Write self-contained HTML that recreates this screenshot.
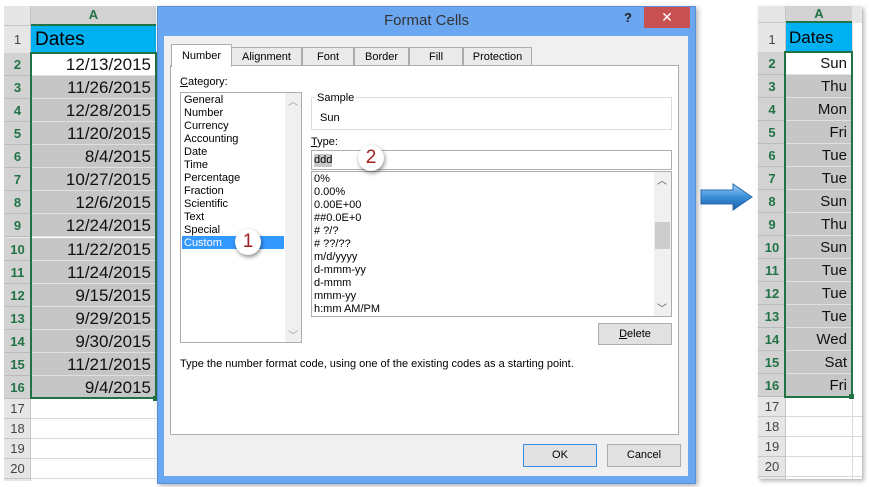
<!DOCTYPE html>
<html><head><style>
*{margin:0;padding:0;box-sizing:border-box}
body{width:869px;height:487px;background:#fff;position:relative;overflow:hidden;font-family:"Liberation Sans",sans-serif}
.a{position:absolute}
.t{font-size:11px;color:#000;white-space:nowrap;line-height:13px}
.hdr{background:#e6e6e6;border-right:1px solid #c6c6c6;border-bottom:1px solid #c6c6c6}
.rn{position:absolute;text-align:center;font-size:13px;color:#217346;font-weight:bold}
.rn2{position:absolute;text-align:center;font-size:13px;color:#444}
.cell{position:absolute;background:#c6c6c6;border-bottom:1px solid #e0e0e0;text-align:right;font-size:17px;color:#111;padding-right:4px}
.btn{position:absolute;background:#e1e1e1;border:1px solid #adadad;font-size:11px;text-align:center;line-height:20px}
.circ{position:absolute;width:26px;height:26px;border-radius:50%;background:#fff;box-shadow:1px 2px 4px rgba(0,0,0,.45);color:#a32020;font-size:19px;text-align:center;line-height:26px}
</style></head><body>

<!-- LEFT SHEET -->
<div class="a" style="left:4px;top:6px;width:152px;height:475px;background:#fff"></div>
<div class="a hdr" style="left:4px;top:6px;width:27px;height:20px"></div>
<div class="a" style="left:31px;top:6px;width:125px;height:20px;background:#d2d2d2;border-bottom:2px solid #217346;text-align:center;font-size:13px;font-weight:bold;color:#217346;line-height:18px">A</div>
<div class="a" style="left:4px;top:26px;width:27px;height:455px;background:#e6e6e6;border-right:1px solid #c6c6c6"></div>
<div class="a" style="left:31px;top:26px;width:125px;height:27px;background:#00b0f0;font-size:19px;padding-left:4px;line-height:28px">Dates</div>
<div class="rn2" style="left:4px;top:32px;width:27px">1</div>
<div id="L"></div>
<div class="a" style="left:30px;top:52px;width:127px;height:347px;border:2px solid #217346"></div>
<div class="a" style="left:153px;top:396px;width:5px;height:5px;background:#217346"></div>

<!-- RIGHT SHEET -->
<div class="a" style="left:758px;top:6px;width:104px;height:473px;background:#fff;box-shadow:2px 2px 4px rgba(0,0,0,.3)"></div>
<div class="a hdr" style="left:758px;top:6px;width:28px;height:17px"></div>
<div class="a" style="left:786px;top:6px;width:66px;height:17px;background:#d2d2d2;border-bottom:2px solid #217346;text-align:center;font-size:13px;font-weight:bold;color:#217346;line-height:15px">A</div>
<div class="a" style="left:852px;top:6px;width:10px;height:17px;background:#e6e6e6"></div>
<div class="a" style="left:758px;top:23px;width:28px;height:456px;background:#e6e6e6;border-right:1px solid #c6c6c6"></div>
<div class="a" style="left:786px;top:23px;width:66px;height:29px;background:#00b0f0;font-size:17px;padding-left:3px;line-height:30px">Dates</div>
<div class="rn2" style="left:758px;top:32px;width:28px">1</div>
<div id="R"></div>
<div class="a" style="left:784px;top:51px;width:69px;height:347px;border:2px solid #217346"></div>
<div class="a" style="left:849px;top:394px;width:5px;height:5px;background:#217346"></div>

<!-- ARROW -->
<svg class="a" style="left:700px;top:183px" width="54" height="30"><defs><linearGradient id="g" x1="0" y1="0" x2="0" y2="1"><stop offset="0" stop-color="#9fd0f5"/><stop offset=".5" stop-color="#3a8fd8"/><stop offset="1" stop-color="#1d5fa8"/></linearGradient></defs><path d="M1 7 H33 V1 L52 14 L33 27 V21 H1 Z" fill="url(#g)" stroke="#2a6cb0" stroke-width="1"/></svg>

<!-- DIALOG -->
<div class="a" style="left:157px;top:6px;width:539px;height:478px;background:#6ba6f1;border:1px solid #5a8fd8;box-shadow:2px 2px 5px rgba(0,0,0,.3)"></div>
<div class="a" style="left:157px;top:12px;width:539px;text-align:center;font-size:15px;color:#333">Format Cells</div>
<div class="a" style="left:624px;top:10px;font-size:13px;font-weight:bold;color:#222">?</div>
<div class="a" style="left:644px;top:7px;width:46px;height:21px;background:#c75050;color:#fff;text-align:center;font-size:14px;line-height:20px">✕</div>
<div class="a" style="left:164px;top:36px;width:524px;height:440px;background:#f0f0f0"></div>
<div class="a" style="left:170px;top:65px;width:509px;height:370px;background:#fff;border:1px solid #adadad"></div>
<div class="a t" style="left:231px;top:47px;width:71px;height:19px;border:1px solid #adadad;background:#eaeaea;text-align:center;line-height:18px">Alignment</div>
<div class="a t" style="left:302px;top:47px;width:52px;height:19px;border:1px solid #adadad;background:#eaeaea;text-align:center;line-height:18px">Font</div>
<div class="a t" style="left:354px;top:47px;width:55px;height:19px;border:1px solid #adadad;background:#eaeaea;text-align:center;line-height:18px">Border</div>
<div class="a t" style="left:409px;top:47px;width:54px;height:19px;border:1px solid #adadad;background:#eaeaea;text-align:center;line-height:18px">Fill</div>
<div class="a t" style="left:463px;top:47px;width:69px;height:19px;border:1px solid #adadad;background:#eaeaea;text-align:center;line-height:18px">Protection</div>
<div class="a t" style="left:171px;top:44px;width:61px;height:23px;border:1px solid #adadad;border-bottom:none;background:#fff;text-align:center;line-height:22px">Number</div>

<div class="a t" style="left:180px;top:76px"><u>C</u>ategory:</div>
<div class="a" style="left:180px;top:92px;width:122px;height:251px;border:1px solid #adadad;background:#fff"></div>
<div class="a" style="left:285px;top:93px;width:16px;height:249px;background:#f0f0f0"></div>
<div class="a" style="left:288px;top:93px;font-size:10px;color:#999">︿</div>
<div class="a" style="left:288px;top:327px;font-size:10px;color:#999">﹀</div>
<div class="a" style="left:182px;top:236px;width:102px;height:13px;background:#3399ff"></div>
<div class="a t" style="left:184px;top:94px;line-height:13px">General<br>Number<br>Currency<br>Accounting<br>Date<br>Time<br>Percentage<br>Fraction<br>Scientific<br>Text<br>Special<br><span style="color:#fff">Custom</span></div>

<div class="a" style="left:311px;top:97px;width:361px;height:33px;border:1px solid #dcdcdc"></div>
<div class="a t" style="left:315px;top:92px;background:#fff;padding:0 2px">Sample</div>
<div class="a t" style="left:320px;top:112px">Sun</div>
<div class="a t" style="left:311px;top:136px"><u>T</u>ype:</div>
<div class="a" style="left:311px;top:150px;width:361px;height:20px;border:1px solid #adadad;background:#fff"></div>
<div class="a t" style="left:314px;top:154px;background:#c8c8c8">ddd</div>
<div class="a" style="left:311px;top:171px;width:361px;height:146px;border:1px solid #adadad;background:#fff"></div>
<div class="a" style="left:654px;top:172px;width:17px;height:144px;background:#f0f0f0"></div>
<div class="a" style="left:655px;top:222px;width:15px;height:27px;background:#cdcdcd"></div>
<div class="a" style="left:657px;top:172px;font-size:10px;color:#555">︿</div>
<div class="a" style="left:657px;top:300px;font-size:10px;color:#555">﹀</div>
<div class="a t" style="left:314px;top:173px;line-height:13px">0%<br>0.00%<br>0.00E+00<br>##0.0E+0<br># ?/?<br># ??/??<br>m/d/yyyy<br>d-mmm-yy<br>d-mmm<br>mmm-yy<br>h:mm AM/PM</div>

<div class="btn" style="left:598px;top:323px;width:74px;height:22px"><u>D</u>elete</div>
<div class="a t" style="left:180px;top:358px">Type the number format code, using one of the existing codes as a starting point.</div>
<div class="btn" style="left:523px;top:444px;width:74px;height:23px;border-color:#3c8ce6">OK</div>
<div class="btn" style="left:607px;top:444px;width:74px;height:23px">Cancel</div>

<div class="circ" style="left:235px;top:229px">1</div>
<div class="circ" style="left:358px;top:145px">2</div>

<script>
var d=["12/13/2015","11/26/2015","12/28/2015","11/20/2015","8/4/2015","10/27/2015","12/6/2015","12/24/2015","11/22/2015","11/24/2015","9/15/2015","9/29/2015","9/30/2015","11/21/2015","9/4/2015"];
var w=["Sun","Thu","Mon","Fri","Tue","Tue","Sun","Thu","Sun","Tue","Tue","Tue","Wed","Sat","Fri"];
var L="",R="";
for(var i=0;i<15;i++){
 var y=53+i*23.07,bg=i==0?"#fff":"#c6c6c6";
 L+='<div class="cell" style="left:32px;top:'+y+'px;width:123px;height:23px;line-height:23px;background:'+bg+'">'+d[i]+'</div>';
 L+='<div class="rn" style="left:4px;top:'+y+'px;width:27px;height:23px;line-height:23px;background:#d2d2d2;border-bottom:1px solid #bbb">'+(i+2)+'</div>';
 var yr=52+i*23;
 R+='<div class="cell" style="left:786px;top:'+yr+'px;width:65px;height:23px;line-height:23px;font-size:15px;background:'+bg+'">'+w[i]+'</div>';
 R+='<div class="rn" style="left:758px;top:'+yr+'px;width:28px;height:23px;line-height:23px;background:#d2d2d2;border-bottom:1px solid #bbb">'+(i+2)+'</div>';
}
for(var j=0;j<4;j++){
 var y2=399+j*20;
 L+='<div class="rn2" style="left:4px;top:'+y2+'px;width:27px;height:20px;line-height:20px;border-bottom:1px solid #c6c6c6">'+(17+j)+'</div><div class="a" style="left:31px;top:'+(y2+19)+'px;width:125px;height:1px;background:#dadada"></div>';
 var y3=397+j*20;
 R+='<div class="rn2" style="left:758px;top:'+y3+'px;width:28px;height:20px;line-height:20px;border-bottom:1px solid #c6c6c6">'+(17+j)+'</div><div class="a" style="left:786px;top:'+(y3+19)+'px;width:76px;height:1px;background:#dadada"></div>';
}
R+='<div class="a" style="left:852px;top:23px;width:1px;height:456px;background:#dadada"></div>';
document.getElementById("L").outerHTML=L;
document.getElementById("R").outerHTML=R;
</script>
</body></html>
